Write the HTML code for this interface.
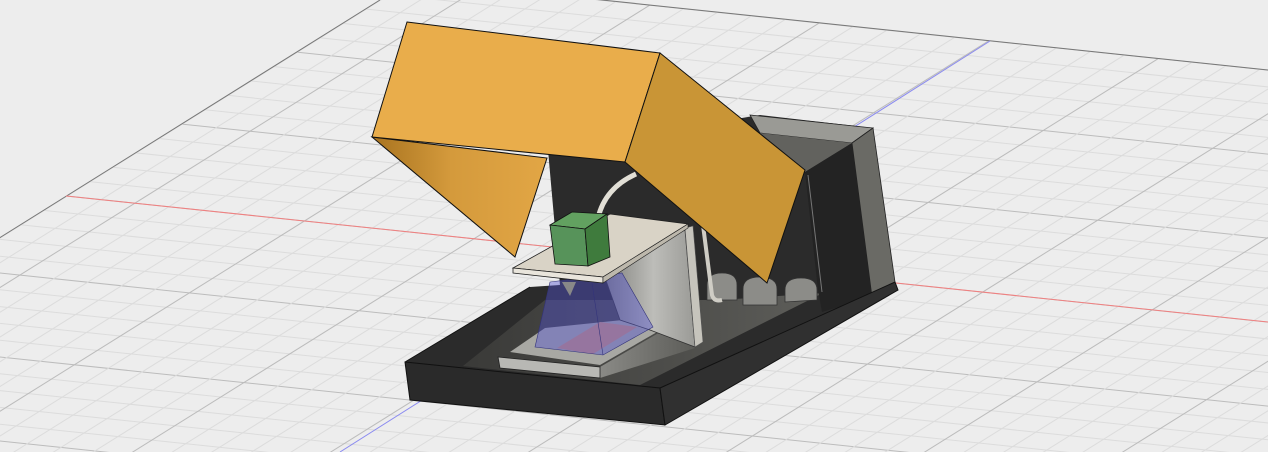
<!DOCTYPE html>
<html><head><meta charset="utf-8"><style>
html,body{margin:0;padding:0;background:#ededed;width:1268px;height:452px;overflow:hidden}
svg{display:block}
</style></head><body>
<svg width="1268" height="452" viewBox="0 0 1268 452" xmlns="http://www.w3.org/2000/svg">
<defs>
<linearGradient id="lf" x1="0" y1="0" x2="1" y2="0">
<stop offset="0" stop-color="#a8731f"/><stop offset="0.45" stop-color="#d49a3c"/><stop offset="1" stop-color="#e2a645"/></linearGradient>
<linearGradient id="fl" x1="0" y1="0" x2="1" y2="0">
<stop offset="0" stop-color="#3a3a38"/><stop offset="0.6" stop-color="#4e4e4b"/><stop offset="1" stop-color="#5e5e5a"/></linearGradient>
<linearGradient id="pn" x1="0" y1="0" x2="1" y2="0">
<stop offset="0" stop-color="#7e7e7a"/><stop offset="0.55" stop-color="#bdbdb9"/><stop offset="1" stop-color="#9a9a96"/></linearGradient>
<linearGradient id="vs" x1="0" y1="0" x2="1" y2="0">
<stop offset="0" stop-color="#8a8a86"/><stop offset="1" stop-color="#5c5c58"/></linearGradient>
</defs>
<rect width="1268" height="452" fill="#ededed"/>
<g id="grid"></g>
<polygon points="-500,-30 1300,-30 1300,73 412,-20 -420,500 -500,500" fill="#ededed"/>
<line x1="380" y1="0" x2="-343" y2="452" stroke="#777" stroke-width="1"/>
<line x1="412" y1="-20" x2="1268" y2="70" stroke="#777" stroke-width="1"/>
<line x1="66" y1="196" x2="1268" y2="322" stroke="#f08080" stroke-width="1"/>
<line x1="990" y1="41" x2="340" y2="452" stroke="#8a8af0" stroke-width="1"/>

<polygon points="548,150 760,115 873,128 895,282 660,388 405,362 530,287 560,285" fill="#2b2b2b"/>
<polygon points="463,366 545,300 720,300 823,293 640,385" fill="url(#fl)"/>
<polygon points="750,115 873,128 852,143 760,133" fill="#9a9a95" stroke="#222" stroke-width="0.8"/>
<polygon points="760,133 852,143 805,172 770,160" fill="#62625e"/>
<polygon points="852,143 873,128 895,282 872,297" fill="#6a6a65" stroke="#222" stroke-width="0.8"/>
<polygon points="805,172 852,143 872,297 822,312 818,290" fill="#232323"/>
<line x1="808" y1="175" x2="822" y2="292" stroke="#777" stroke-width="1"/>
<g fill="#8c8c88" stroke="#333" stroke-width="0.8">
<path d="M707,300 L707,285 Q707,273 722,273 Q737,273 737,285 L737,300 Z"/>
<path d="M743,305 L743,289 Q743,277 760,277 Q777,277 777,289 L777,305 Z"/>
<path d="M785,302 L785,290 Q785,278 801,278 Q817,278 817,290 L817,300 Z"/>
</g>
<path d="M703,225 L712,295 Q714,302 722,300" stroke="#cfcdc5" stroke-width="4" fill="none"/>
<polygon points="510,352 545,328 690,313 600,365" fill="#a8a8a3"/>
<polygon points="600,367 693,313 695,348 600,378" fill="url(#vs)"/>
<polygon points="498,357 600,367 600,378 500,368" fill="#b8b8b4" stroke="#222" stroke-width="0.8"/>
<polygon points="557,348 593,354 637,327 600,322" fill="#c9907a"/>
<polygon points="603,272 685,230 695,347 650,330 620,320" fill="url(#pn)" stroke="#333" stroke-width="0.8"/>
<polygon points="685,228 693,226 703,342 695,347" fill="#c6c4bc" stroke="#555" stroke-width="0.6"/>
<polygon points="550,282 622,273 653,327 603,355 535,347" fill="rgba(80,80,210,0.42)" stroke="#33337a" stroke-width="0.6"/>
<line x1="592" y1="283" x2="603" y2="355" stroke="#33337a" stroke-width="0.6"/>
<polygon points="562,282 576,282 570,296" fill="#888"/>
<path d="M598,218 Q605,188 636,174" stroke="#e2dfd6" stroke-width="5" fill="none"/>
<polygon points="513,268 603,277 688,224 610,214" fill="#d9d3c6" stroke="#222" stroke-width="0.8"/>
<polygon points="513,268 603,277 603,283 513,273" fill="#e9e5dc" stroke="#222" stroke-width="0.8"/>
<polygon points="603,277 688,224 688,228 603,283" fill="#bdb8ac" stroke="#222" stroke-width="0.6"/>
<polygon points="550,225 572,212 607,214 585,229" fill="#62a160" stroke="#111" stroke-width="0.8"/>
<polygon points="550,225 585,229 588,266 555,264" fill="#57935a" stroke="#111" stroke-width="0.8"/>
<polygon points="585,229 607,214 610,257 588,266" fill="#3f7b3d" stroke="#111" stroke-width="0.8"/>
<polygon points="372,137 547,158 515,257" fill="url(#lf)" stroke="#111" stroke-width="1"/>
<polygon points="407,22 660,53 625,162 372,137" fill="#e9ad4b" stroke="#111" stroke-width="1"/>
<polygon points="660,53 805,170 767,283 625,162" fill="#c99536" stroke="#111" stroke-width="1"/>
<polygon points="405,362 660,388 665,425 410,400" fill="#2a2a2a" stroke="#111" stroke-width="1"/>
<polygon points="660,388 895,282 898,290 665,425" fill="#303030" stroke="#111" stroke-width="1"/>
<line x1="405" y1="362" x2="530" y2="287" stroke="#111" stroke-width="1"/>
</svg>
<script>
(function(){
var g=document.getElementById('grid'),NS='http://www.w3.org/2000/svg';
function L(x1,y1,x2,y2,c){var l=document.createElementNS(NS,'line');l.setAttribute('x1',x1);l.setAttribute('y1',y1);l.setAttribute('x2',x2);l.setAttribute('y2',y2);l.setAttribute('stroke',c);l.setAttribute('stroke-width','1');g.appendChild(l);}
for(var i=0;i<60;i++){var y0=-63+16.8*i;var c=(i%5==0)?'#bcbcbc':'#dcdcdc';L(-500,y0-52.5,1300,y0+136.5,c);}
for(var j=-40;j<60;j++){var x0=460+39.6*j;var c=(j%5==0)?'#bcbcbc':'#dcdcdc';L(x0+160,-100,x0-800,500,c);}
})();
</script>
</body></html>
